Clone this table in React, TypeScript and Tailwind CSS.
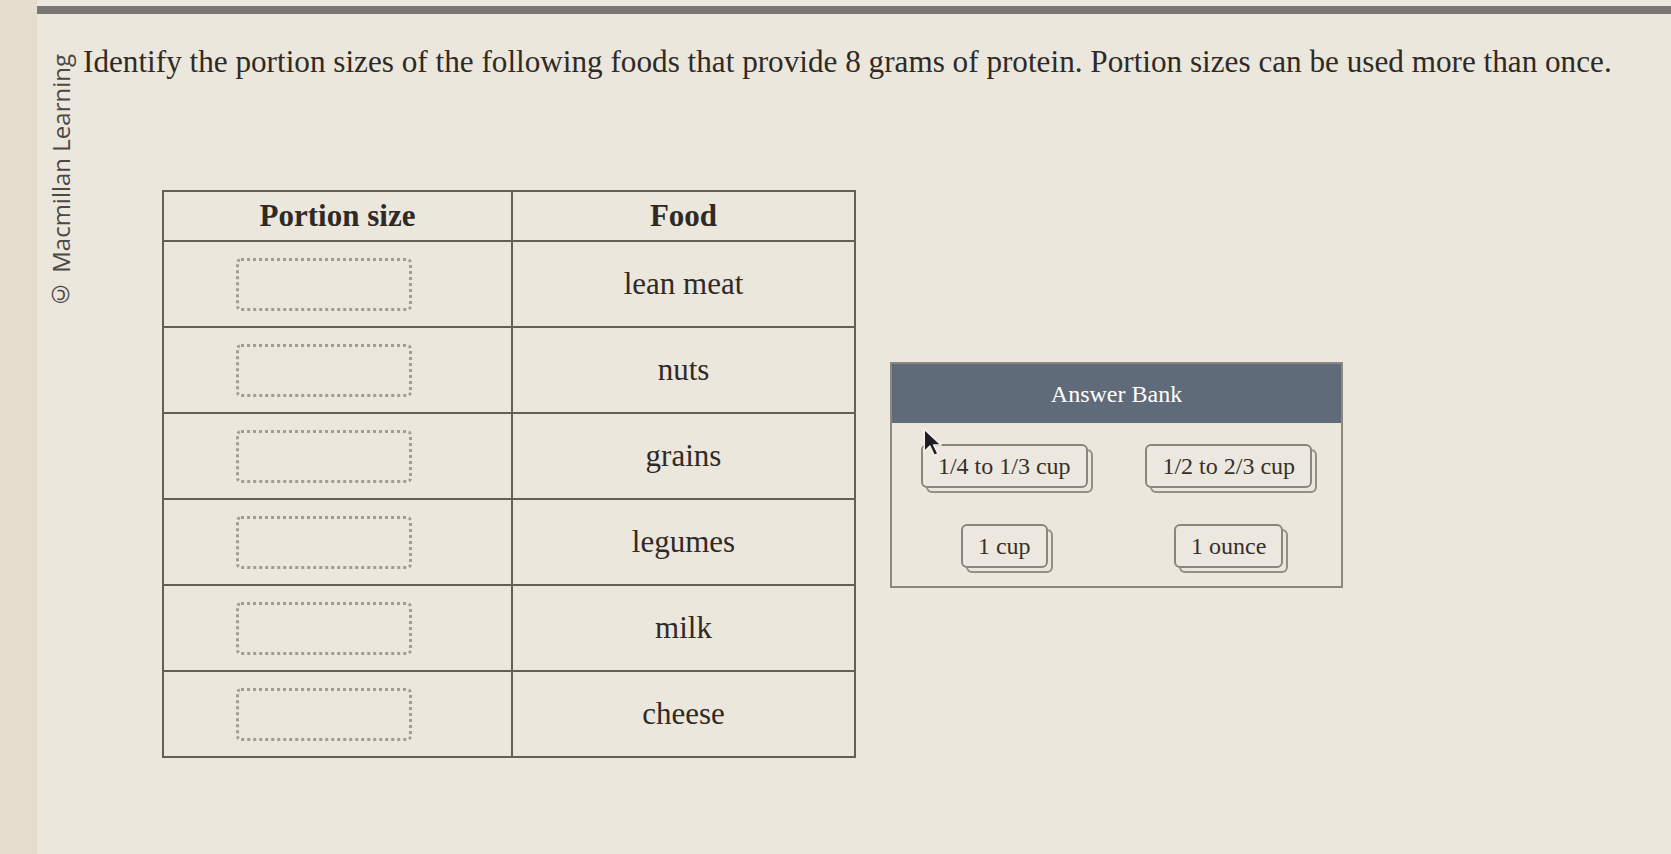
import React from 'react';

const foods = ['lean meat', 'nuts', 'grains', 'legumes', 'milk', 'cheese'];
const answers = ['1/4 to 1/3 cup', '1/2 to 2/3 cup', '1 cup', '1 ounce'];

const serif = "font-['Liberation_Serif','Times_New_Roman',serif]";

const Chip: React.FC<{ label: string }> = ({ label }) => (
  <div
    className={`${serif} h-[44px] px-[15px] flex items-center rounded-[6px] border-2 border-[#8d857d] bg-[#ede8df] text-[24px] text-[#36302b] shadow-[5px_5px_0_-2px_#ebe6db,5px_5px_0_0_#968e86]`}
  >
    {label}
  </div>
);

const App: React.FC = () => {
  return (
    <div className="w-full h-[854px] flex bg-[#ece7dc] overflow-hidden">
      {/* light strip on the far left */}
      <div className="w-[37px] shrink-0 bg-[#e6dccd]" />

      <div className="flex-1 flex flex-col pt-[6px]">
        <div className="h-[8px] bg-[#7b7775]" />

        <div className="flex">
          {/* copyright, read bottom to top */}
          <div className="w-[46px] shrink-0 pl-[12px] pt-[40px]">
            <div className="[writing-mode:vertical-rl] rotate-180 font-['Open_Sans',sans-serif] text-[24px] leading-[24px] text-[#4c4845] whitespace-nowrap">
              © Macmillan Learning
            </div>
          </div>

          <div className="flex-1 flex flex-col">
            <h1 className={`${serif} mt-[30px] text-[31.2px] leading-[36px] text-[#2f2a26] font-normal whitespace-nowrap`}>
              Identify the portion sizes of the following foods that provide 8 grams of protein. Portion sizes can be used more than once.
            </h1>

            <div className="flex items-start mt-[110px]">
              <table className={`${serif} ml-[79px] w-[694px] border-collapse border-2 border-[#665e57] text-[#2f2a26]`}>
                <thead>
                  <tr className="h-[50px]">
                    <th className="w-[349px] border-2 border-[#665e57] text-[31px] font-bold">Portion size</th>
                    <th className="border-2 border-[#665e57] text-[31px] font-bold">Food</th>
                  </tr>
                </thead>
                <tbody>
                  {foods.map((food) => (
                    <tr key={food} className="h-[86px]">
                      <td className="border-2 border-[#665e57]">
                        <div className="flex justify-center pr-[28px]">
                          <div className="w-[176px] h-[53px] rounded-[5px] border-[3px] border-dotted border-[#a39c94]" />
                        </div>
                      </td>
                      <td className="border-2 border-[#665e57] text-center text-[31px]">{food}</td>
                    </tr>
                  ))}
                </tbody>
              </table>

              <div className="relative ml-[34px] mt-[172px] w-[453px] border-2 border-[#8d8780]">
                <div className={`${serif} h-[59px] flex items-center justify-center bg-[#5f6b79] text-white text-[24px]`}>
                  Answer Bank
                </div>
                <div className="grid grid-cols-2 justify-items-center pt-[21px] pb-[18px] gap-y-[36px]">
                  {answers.map((a) => (
                    <Chip key={a} label={a} />
                  ))}
                </div>

                {/* mouse pointer */}
                <svg className="absolute left-[31px] top-[64px]" width="20" height="30" viewBox="0 0 16 24">
                  <path d="M1 1 L1 19 L5.5 14.5 L9 22 L12 20.5 L8.5 13.5 L14.5 13.5 Z" fill="#1f1d24" stroke="#f4f1ea" strokeWidth="1.2" strokeLinejoin="round" />
                </svg>
              </div>
            </div>
          </div>
        </div>
      </div>
    </div>
  );
};

export default App;
